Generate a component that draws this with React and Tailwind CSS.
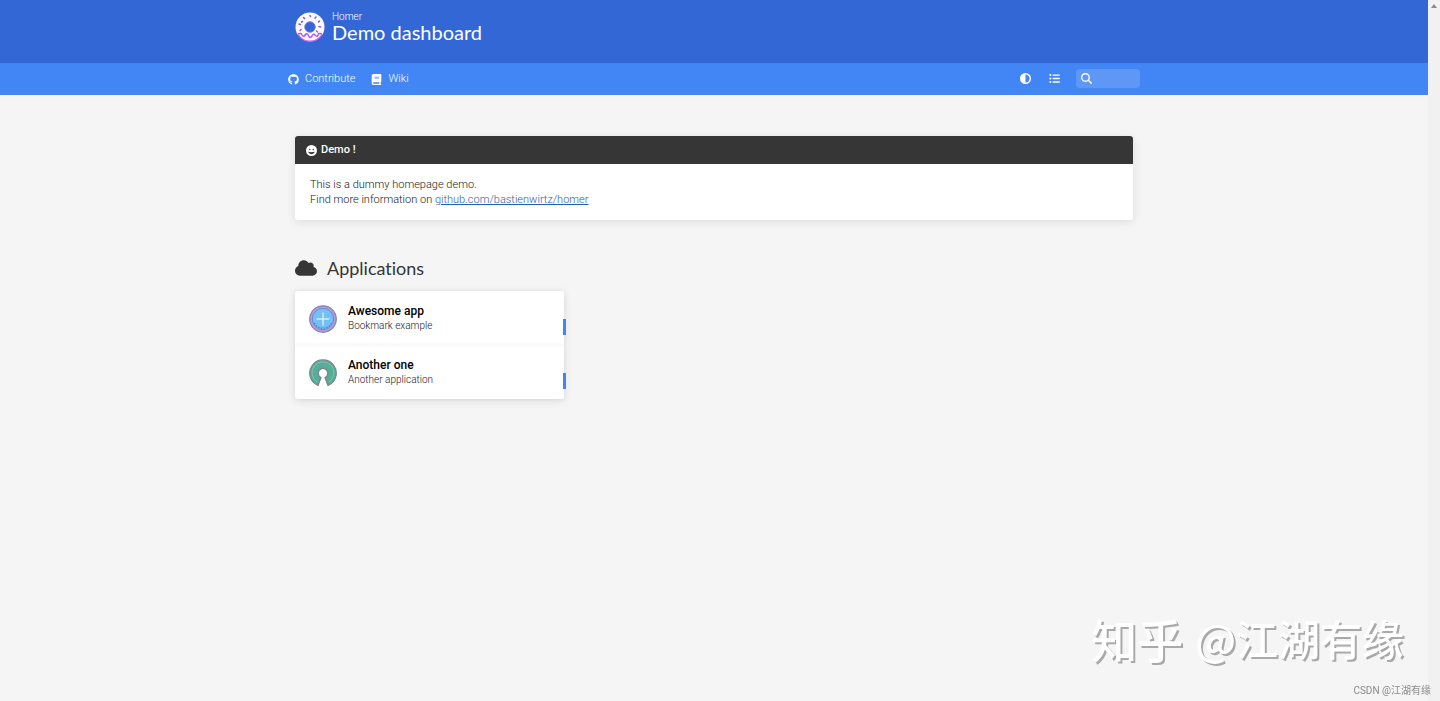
import {
  FaBook,
  FaCircleHalfStroke,
  FaCloud,
  FaFaceGrin,
  FaGithub,
  FaListUl,
  FaMagnifyingGlass,
} from "react-icons/fa6";

const links = [
  { name: "Contribute", icon: FaGithub, url: "#contribute" },
  { name: "Wiki", icon: FaBook, url: "#wiki" },
];

const apps = [
  { name: "Awesome app", subtitle: "Bookmark example", logo: PlusLogo },
  { name: "Another one", subtitle: "Another application", logo: KeyholeLogo },
];

function DonutLogo() {
  return (
    <svg viewBox="0 0 60 60" className="size-[30px]" aria-hidden="true">
      <defs>
        <linearGradient id="donut" x1="0" y1="0" x2="0" y2="60" gradientUnits="userSpaceOnUse">
          <stop offset="0.3" stopColor="#5a5fe0" />
          <stop offset="1" stopColor="#e055ea" />
        </linearGradient>
      </defs>
      <circle cx="30" cy="30" r="29" fill="#fdf9ff" />
      <path
        d="M6 43c4 2 5-2 7 1 3 6 5 6 8 1 3-4 5 0 7 4 2 3 4 2 6-1 3-6 4-5 7-1 3 3 5 1 6-3 2-3 4 1 7-1"
        fill="none"
        stroke="url(#donut)"
        strokeWidth="3"
      />
      <path
        d="M6 45a28.500 28.500 0 0 0 48 0"
        fill="none"
        stroke="url(#donut)"
        strokeWidth="2.500"
      />
      <circle cx="30" cy="30" r="10.500" fill="#3367d6" stroke="#7a78e4" strokeWidth="2" />
      <g stroke="url(#donut)" strokeWidth="3" strokeLinecap="round">
        <path d="M17 11l2 2M30 7l1 2M42 10l-2 2M49 18l-2 2M8 24l3 1M12 35l-2 2M48 29l3 1M43 38l2 2M15 19l-2 1" />
      </g>
    </svg>
  );
}

function PlusLogo() {
  return (
    <svg viewBox="0 0 56 56" className="size-7 shrink-0" aria-hidden="true">
      <circle cx="28" cy="28" r="26.5" fill="#b79fd4" stroke="#8482b4" strokeWidth="2.5" />
      <circle cx="28" cy="28" r="21.5" fill="#74bff5" stroke="#7089cc" strokeWidth="2" />
      <path
        d="M11 36a19 19 0 0 0 34 0"
        fill="none"
        stroke="#5373c0"
        strokeWidth="2.5"
        strokeDasharray="2.5 3"
      />
      <path d="M28 15v26M15 28h26" stroke="#d4edfd" strokeWidth="3" />
    </svg>
  );
}

function KeyholeLogo() {
  return (
    <svg viewBox="0 0 56 56" className="size-7 shrink-0" aria-hidden="true">
      <path
        d="M18 53A26.500 26.500 0 1 1 38 53L32 37a9.500 9.500 0 1 0-8 0Z"
        fill="#55ae98"
        stroke="#7b8590"
        strokeWidth="2.500"
        strokeLinejoin="round"
      />
      <path
        d="M16 46A22 22 0 1 1 40 46"
        fill="none"
        stroke="#87bfb2"
        strokeWidth="2"
      />
    </svg>
  );
}

function Header() {
  return (
    <header className="text-white">
      <div className="h-[63px] bg-[#3367d6]">
        <div className="mx-auto flex max-w-[852px] px-[7px] pt-3">
          <DonutLogo />
          <div className="ml-[7px]">
            <p className="text-[10px] leading-[10px] font-light">Homer</p>
            <h1 className="font-[Lato] text-[20px] leading-5">
              Demo dashboard
            </h1>
          </div>
        </div>
      </div>
      <div className="bg-[#4285f4]">
        <div className="mx-auto flex h-8 max-w-[852px] items-center justify-between">
          <nav className="flex gap-4 text-[11px] font-light">
            {links.map(({ name, icon: Icon, url }) => (
              <a key={name} href={url} className="flex items-center gap-1.5">
                <Icon className="size-[11px]" />
                {name}
              </a>
            ))}
          </nav>
          <div className="flex items-center pb-0.5">
            <button type="button" aria-label="Toggle theme" className="mr-[18px]">
              <FaCircleHalfStroke className="size-[11px]" />
            </button>
            <button type="button" aria-label="Toggle layout" className="mr-4">
              <FaListUl className="size-[11px]" />
            </button>
            <label className="flex h-[19px] w-16 items-center rounded bg-[#5e97f6] pl-[5px]">
              <FaMagnifyingGlass className="size-[11px] shrink-0" />
              <input
                type="text"
                aria-label="Search"
                className="w-full min-w-0 bg-transparent pl-1 text-[11px] outline-none"
              />
            </label>
          </div>
        </div>
      </div>
    </header>
  );
}

function Message() {
  return (
    <article className="overflow-hidden rounded-[3px] bg-white text-[11px] shadow-[0_2px_10px_rgba(0,0,0,0.1)]">
      <div className="flex h-7 items-center gap-1 bg-[#363636] px-[11px] font-medium text-white">
        <FaFaceGrin className="size-[11px]" />
        Demo !
      </div>
      <div className="px-[15px] py-[13px] leading-[15px] font-light text-[#202020]">
        <p>This is a dummy homepage demo.</p>
        <p>
          Find more information on{" "}
          <a href="#homer" className="text-[#1f63b0] underline">
            github.com/bastienwirtz/homer
          </a>
        </p>
      </div>
    </article>
  );
}

function AppCard({ app }) {
  const Logo = app.logo;
  return (
    <li className="relative h-[54px] shadow-[0_0_4px_rgba(0,0,0,0.05)]">
      <a href="#app" className="flex h-full items-center gap-[11px] px-[14px] pt-px">
        <Logo />
        <div>
          <p className="text-[12px] leading-[15px] font-medium text-black">
            {app.name}
          </p>
          <p className="text-[10px] leading-[14px] font-light text-[#202020]">
            {app.subtitle}
          </p>
        </div>
      </a>
      <span className="absolute -right-0.5 bottom-2.5 h-4 w-[3px] bg-[#4285f4]" />
    </li>
  );
}

export default function App() {
  return (
    <div className="flex min-h-screen bg-[#f5f5f5] font-[Roboto,'Liberation_Sans',sans-serif]">
      <div className="min-w-0 flex-1">
        <Header />
        <main className="mx-auto max-w-[852px] px-[7px] pt-[41px]">
          <Message />
          <section>
            <h2 className="mt-9 mb-[11px] flex items-center gap-2.5 font-[Lato] text-[18px] leading-6 text-[#363636] [font-variant-ligatures:none]">
              <FaCloud className="size-[22px]" />
              Applications
            </h2>
            <ul className="w-[269px] rounded-[3px] bg-white shadow-[0_2px_10px_rgba(0,0,0,0.1)]">
              {apps.map((app) => (
                <AppCard key={app.name} app={app} />
              ))}
            </ul>
          </section>
        </main>
      </div>
      <div className="flex w-3 justify-center bg-[#f1f1f1] pt-1">
        <svg viewBox="0 0 6 4" className="h-1 w-1.5" aria-hidden="true">
          <path d="M3 0l3 4H0Z" fill="#8a8a8a" />
        </svg>
      </div>
      <p className="fixed right-9 bottom-[31px] flex items-center gap-3 font-['Noto_Sans_CJK_SC',sans-serif] text-[42px] leading-[64px] font-medium text-white [text-shadow:2px_2px_0_#a9a9a9]">
        <span className="text-[46px]">知乎</span>
        <span>@江湖有缘</span>
      </p>
      <p className="fixed right-[9px] bottom-0.5 font-[Roboto,'Noto_Sans_CJK_SC',sans-serif] text-[10px] leading-4 text-[#8c8c8c]">
        CSDN @江湖有缘
      </p>
    </div>
  );
}
